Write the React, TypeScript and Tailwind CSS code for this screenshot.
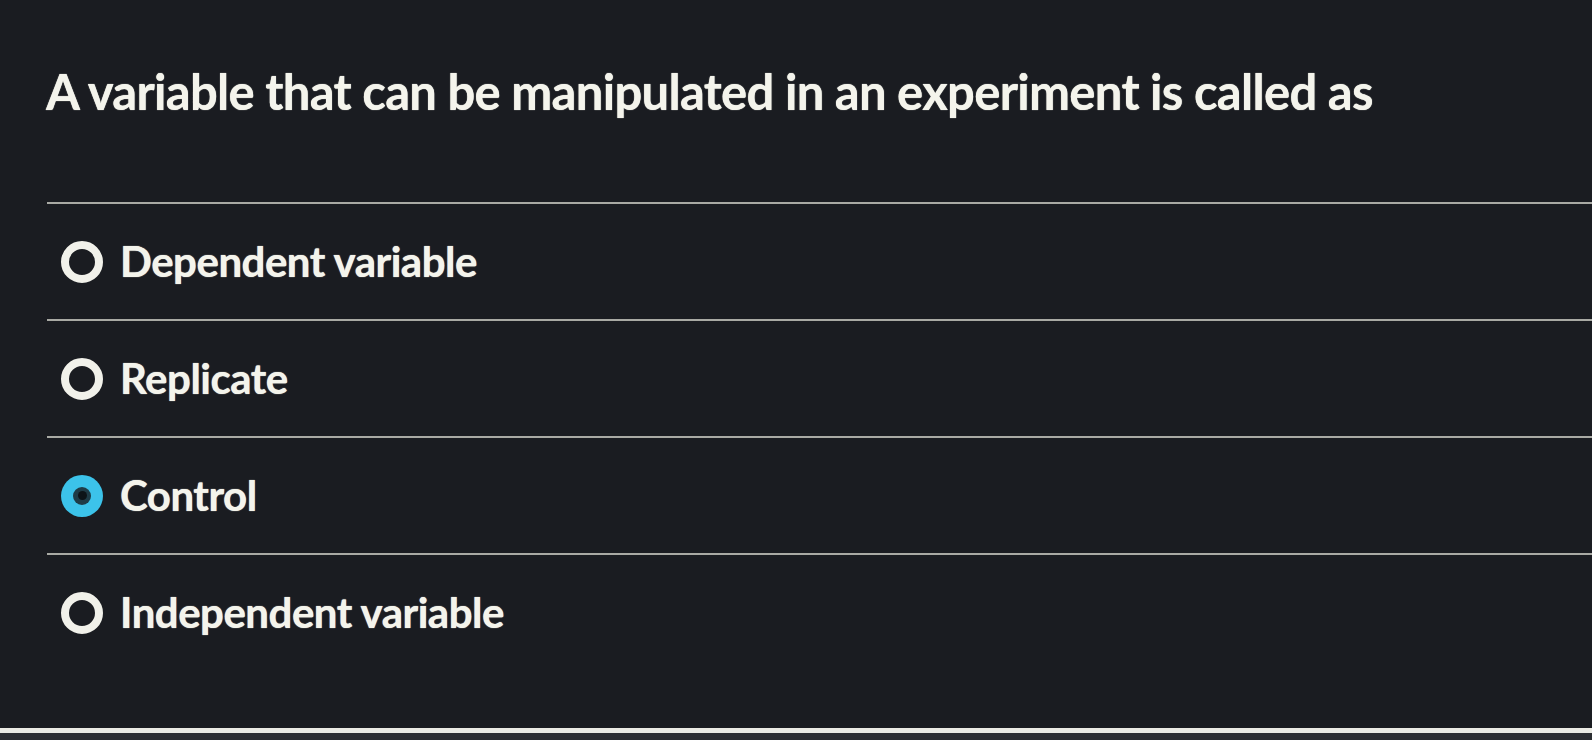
import React from "react";

const options = [
  { label: "Dependent variable", checked: false },
  { label: "Replicate", checked: false },
  { label: "Control", checked: true },
  { label: "Independent variable", checked: false },
];

function Radio({ checked }: { checked: boolean }) {
  if (checked) {
    return (
      <span className="flex h-[42px] w-[42px] shrink-0 items-center justify-center rounded-full bg-[#3cc3ea]">
        <span className="flex h-[18px] w-[18px] items-center justify-center rounded-full bg-[#1f3c47]">
          <span className="h-[9px] w-[9px] rounded-full bg-[#0d1418]" />
        </span>
      </span>
    );
  }
  return (
    <span className="h-[42px] w-[42px] shrink-0 rounded-full border-[8px] border-[#f1f1ea] bg-[#1a1c21]" />
  );
}

export default function App() {
  return (
    <div
      className="flex h-[740px] w-[1592px] flex-col overflow-hidden bg-[#1a1c21] text-[#f4f4ec]"
      style={{ fontFamily: "Lato, 'Open Sans', sans-serif" }}
    >
      <div className="pl-[46px] pt-[62px]">
        <h1 className="text-[49px] font-bold leading-[58px] tracking-[-0.7px] [text-shadow:0_0_1px_#f4f4ec]">
          A variable that can be manipulated in an experiment is called as
        </h1>
      </div>
      <div className="ml-[47px] mt-[82px] flex flex-col">
        {options.map((o) => (
          <div key={o.label} className="flex flex-col">
            <div className="h-[2px] bg-[#a9aaa4]" />
            <div className="flex h-[115px] items-center gap-[17px] pl-[14px]">
              <Radio checked={o.checked} />
              <span className="text-[42px] font-bold tracking-[-0.5px] [text-shadow:0_0_1px_#f4f4ec]">
                {o.label}
              </span>
            </div>
          </div>
        ))}
      </div>
      <div className="mt-auto h-[5px] bg-[#ebebe4]" />
      <div className="h-[7px] bg-[#2c2e32]" />
    </div>
  );
}
